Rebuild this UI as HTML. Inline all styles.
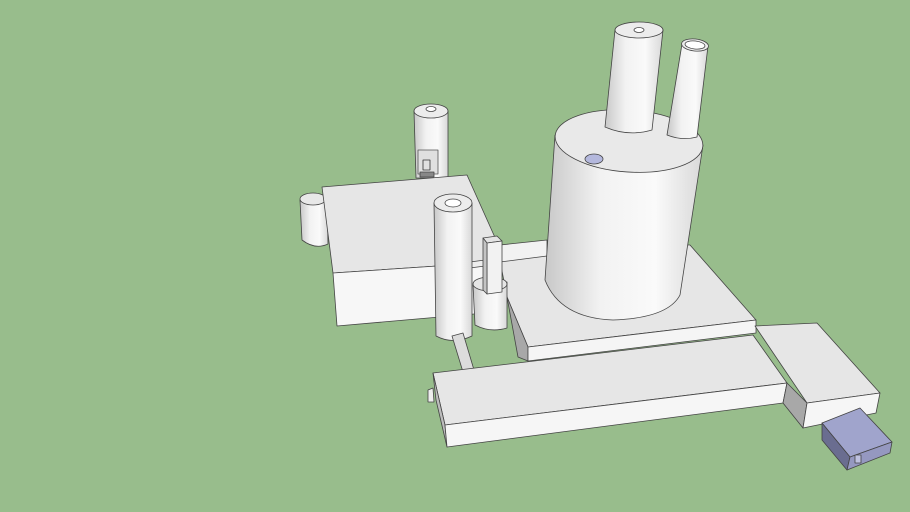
<!DOCTYPE html>
<html><head><style>html,body{margin:0;padding:0;background:#98bd8c;}svg{display:block}</style></head>
<body>
<svg width="910" height="512" viewBox="0 0 910 512" xmlns="http://www.w3.org/2000/svg" stroke="#444" stroke-width="0.8" stroke-linejoin="round">
<defs>
<linearGradient id="cyl" x1="0" x2="1" y1="0" y2="0">
<stop offset="0" stop-color="#c8c8c8"/><stop offset="0.35" stop-color="#f2f2f2"/><stop offset="0.7" stop-color="#fafafa"/><stop offset="1" stop-color="#d8d8d8"/>
</linearGradient>
</defs>
<rect width="910" height="512" fill="#98bd8c" stroke="none"/>

<!-- left small cylinder -->
<path d="M300,200 L302,240 Q315,250 328,244 L327,198 Z" fill="url(#cyl)"/>
<ellipse cx="313" cy="199" rx="13" ry="6" fill="#e8e8e8"/>

<!-- back column -->
<path d="M414,111 L416,178 L448,178 L448,111 Z" fill="url(#cyl)"/>
<ellipse cx="431" cy="111" rx="17" ry="7" fill="#ececec"/>
<ellipse cx="431" cy="109" rx="5" ry="2.5" fill="#fff"/>
<rect x="418" y="150" width="20" height="24" fill="#e0e0e0" stroke="#555"/>
<rect x="423" y="160" width="7" height="10" fill="none" stroke="#333"/>
<rect x="420" y="172" width="14" height="5" fill="#888"/>

<!-- left block -->
<polygon points="322,187 467,175 497,242 497,262 333,273" fill="#e6e6e6"/>
<polygon points="333,273 497,262 497,312 337,326" fill="#f7f7f7"/>

<!-- base platform -->
<polygon points="497,245 690,245 756,320 528,347 507,297" fill="#e6e6e6"/>
<polygon points="507,297 528,347 528,361 518,357" fill="#a8a8a8"/>
<polygon points="528,347 756,320 756,333 528,361" fill="#f5f5f5"/>

<!-- horizontal bar and bracket -->
<polygon points="500,245 547,240 547,256 500,262" fill="#f2f2f2"/>
<polygon points="470,262 500,258 500,264 470,268" fill="#eee"/>
<path d="M473,285 L475,325 Q490,333 507,328 L507,282 Z" fill="url(#cyl)"/>
<ellipse cx="490" cy="284" rx="17" ry="7" fill="#e6e6e6"/>
<polygon points="483,238 497,236 502,241 487,243" fill="#e4e4e4"/>
<polygon points="487,243 502,241 502,292 487,294" fill="#f2f2f2"/>
<polygon points="483,238 487,243 487,294 483,290" fill="#c4c4c4"/>

<!-- front column -->
<path d="M434,203 L436,336 Q453,345 472,336 L472,203 Z" fill="url(#cyl)"/>
<ellipse cx="453" cy="203" rx="19" ry="9" fill="#ececec"/>
<ellipse cx="453" cy="203" rx="8" ry="4" fill="#fff"/>
<!-- pipe -->
<polygon points="452,336 463,333 474,370 463,372" fill="#dcdcdc"/>

<!-- tank -->
<path d="M555,135 L545,280 Q560,318 613,320 Q668,318 680,295 L703,145 Z" fill="url(#cyl)"/>
<ellipse cx="629" cy="141" rx="74" ry="31" transform="rotate(4 629 141)" fill="#e9e9e9"/>
<ellipse cx="594" cy="159" rx="9" ry="5" fill="#b4b8dd"/>

<!-- chimney 1 -->
<path d="M615,30 L605,127 Q628,137 652,130 L663,30 Z" fill="url(#cyl)"/>
<ellipse cx="639" cy="30" rx="24" ry="8" fill="#ececec"/>
<ellipse cx="639" cy="30" rx="5" ry="2.5" fill="#fff"/>
<!-- chimney 2 -->
<path d="M682,44 L667,135 Q682,141 697,137 L708,46 Z" fill="url(#cyl)"/>
<ellipse cx="695" cy="45" rx="13.5" ry="6" transform="rotate(6 695 45)" fill="#ececec"/>
<ellipse cx="695" cy="45" rx="10" ry="4" transform="rotate(6 695 45)" fill="#fff"/>

<!-- long bar -->
<polygon points="428,390 433,388 434,402 428,402" fill="#eee"/>
<polygon points="433,373 753,335 787,383 445,425" fill="#e6e6e6"/>
<polygon points="433,373 445,425 447,447 436,400" fill="#bdbdbd"/>
<polygon points="445,425 787,383 783,403 447,447" fill="#f6f6f6"/>

<!-- right box -->
<polygon points="755,326 817,323 880,393 807,403" fill="#e6e6e6"/>
<polygon points="787,383 807,403 803,428 783,403" fill="#a8a8a8"/>
<polygon points="807,403 880,393 876,413 803,428" fill="#f6f6f6"/>

<!-- blue box -->
<polygon points="822,423 860,408 892,442 850,457" fill="#a0a4cc"/>
<polygon points="822,423 850,457 847,470 822,440" fill="#6a6d90"/>
<polygon points="850,457 892,442 890,453 847,470" fill="#9598c0"/>
<rect x="855" y="455" width="6" height="8" fill="#bfc2e0"/>
</svg>
</body></html>
